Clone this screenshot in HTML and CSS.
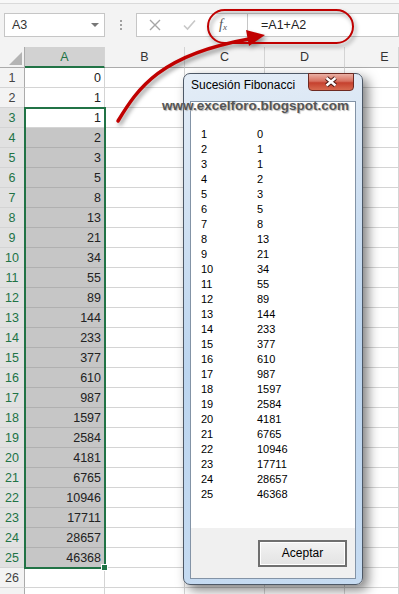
FILE: index.html
```html
<!DOCTYPE html>
<html lang="es">
<head>
  <meta charset="UTF-8" />
  <title>Sucesión Fibonacci</title>
  <link rel="stylesheet" href="styles.css">
</head>
<body>
  <div class="toolbar">
    <div class="namebox"><span>A3</span><span class="caret"></span></div>
    <div class="grip"><i></i><i></i><i></i></div>
    <div class="fxbox">
      <svg class="cancel" width="12" height="12" viewBox="0 0 12 12"><path d="M1 1L11 11M11 1L1 11" stroke="#a6a6a6" stroke-width="1.4" fill="none"/></svg>
      <svg class="enter" width="13" height="12" viewBox="0 0 13 12"><path d="M1 6.5L4.5 10L12 1.5" stroke="#c8c8c8" stroke-width="1.6" fill="none"/></svg>
      <span class="fx">f<sub>x</sub></span>
    </div>
    <div class="formula">=A1+A2</div>
  </div>

  <div class="sheet" id="sheet">
    <div class="corner"></div>
    <div class="colhead on">A</div>
    <div class="colhead">B</div>
    <div class="colhead">C</div>
    <div class="colhead">D</div>
    <div class="colhead last">E</div>
    <div class="selection"></div>
    <div class="handle"></div>
  </div>

  <div class="dialog">
    <div class="titlebar">Sucesión Fibonacci</div>
    <div class="close">
      <svg width="46" height="18" viewBox="0 0 46 18">
        <path d="M18.5 5L27.5 12.5M27.5 5L18.5 12.5" stroke="#4a1a14" stroke-width="4.4" fill="none"/>
        <path d="M18.5 5L27.5 12.5M27.5 5L18.5 12.5" stroke="#fff" stroke-width="2.4" fill="none"/>
      </svg>
    </div>
    <div class="client">
      <div class="list" id="list"></div>
      <div class="buttons"><div class="ok">Aceptar</div></div>
    </div>
  </div>

  <div class="watermark">www.excelforo.blogspot.com</div>

  <svg class="annot" width="399" height="594" viewBox="0 0 399 594">
    <rect x="208" y="10" width="145" height="33" rx="16.5" fill="none" stroke="#c00000" stroke-width="2"/>
    <path d="M118 121C138 88 160 55 249 39" fill="none" stroke="#c00000" stroke-width="3.5" stroke-linecap="round"/>
    <polygon points="265,35 246,30 249,46" fill="#c00000"/>
  </svg>

  <script>
    const fib = [0, 1, 1, 2, 3, 5, 8, 13, 21, 34, 55, 89, 144, 233, 377, 610, 987,
      1597, 2584, 4181, 6765, 10946, 17711, 28657, 46368];

    const sheet = document.getElementById('sheet');
    const sel = sheet.querySelector('.selection');

    // 26 numbered rows plus the top of row 27 peeking in at the bottom
    for (let r = 1; r <= 27; r++) {
      const head = document.createElement('div');
      head.className = 'rowhead' + (r >= 3 && r <= 25 ? ' on' : '');
      if (r <= 26) head.textContent = r;
      sheet.insertBefore(head, sel);

      for (let c = 0; c < 5; c++) {
        const cell = document.createElement('div');
        cell.className = 'cell';
        if (c === 0) {
          cell.classList.add('val');
          if (r >= 4 && r <= 25) cell.classList.add('sel');
          if (r <= 25) cell.textContent = fib[r - 1];
        }
        sheet.insertBefore(cell, sel);
      }
    }

    const list = document.getElementById('list');
    fib.forEach((n, i) => {
      const a = document.createElement('div');
      a.textContent = i + 1;
      const b = document.createElement('div');
      b.textContent = n;
      list.appendChild(a);
      list.appendChild(b);
    });
  </script>
</body>
</html>
```

FILE: styles.css
```css
body {
  margin: 0;
  width: 399px;
  height: 594px;
  overflow: hidden;
  position: relative;
  background: #fff;
  font-family: "Liberation Sans", Arial, sans-serif;
}

/* formula bar */
.toolbar {
  height: 47px;
  box-sizing: border-box;
  padding: 3px 0 0 4px;
  display: flex;
  align-items: center;
  background: linear-gradient(#f8f8f8 0 3px, #dadada 3px 4px, #f3f3f3 4px);
}
.namebox {
  width: 101px;
  height: 24px;
  box-sizing: border-box;
  border: 1px solid #c6c6c6;
  background: #fff;
  display: flex;
  align-items: center;
  justify-content: space-between;
  padding: 0 5px 0 7px;
  font-size: 12.5px;
  color: #333;
}
.caret {
  width: 0;
  height: 0;
  border-left: 4px solid transparent;
  border-right: 4px solid transparent;
  border-top: 4px solid #777;
}
.grip {
  margin-left: 15px;
  display: flex;
  flex-direction: column;
  gap: 2px;
}
.grip i {
  width: 2px;
  height: 2px;
  background: #a0a0a0;
}
.fxbox {
  margin-left: 14px;
  width: 111px;
  height: 24px;
  box-sizing: border-box;
  border: 1px solid #c6c6c6;
  border-right: none;
  background: #fff;
  display: flex;
  align-items: center;
}
.cancel {
  margin-left: 12px;
}
.enter {
  margin-left: 22px;
}
.fx {
  margin-left: 23px;
  font-family: "Liberation Serif", serif;
  font-style: italic;
  font-size: 14px;
  color: #555;
}
.fx sub {
  font-size: 9px;
  vertical-align: -1px;
}
.formula {
  flex: 1;
  height: 24px;
  box-sizing: border-box;
  border: 1px solid #c6c6c6;
  background: #fff;
  padding-left: 13px;
  line-height: 22px;
  font-size: 12.5px;
  color: #222;
}

/* worksheet */
.sheet {
  position: relative;
  display: grid;
  grid-template-columns: 25px repeat(4, 80px) 54px;
  grid-template-rows: 21px;
  grid-auto-rows: 20px;
  font-size: 12.5px;
  color: #222;
}
.corner, .colhead, .rowhead, .cell {
  box-sizing: border-box;
  border-right: 1px solid #d4d4d4;
  border-bottom: 1px solid #d4d4d4;
}
.corner {
  position: relative;
  background: #f3f3f3;
  border-bottom-color: #ababab;
  border-right-color: #ababab;
}
.corner::after {
  content: "";
  position: absolute;
  right: 2px;
  bottom: 2px;
  width: 13px;
  height: 13px;
  background: #b4b4b4;
  clip-path: polygon(100% 0, 100% 100%, 0 100%);
}
.colhead {
  background: #f3f3f3;
  border-bottom-color: #ababab;
  text-align: center;
  line-height: 20px;
  color: #333;
}
.colhead.last {
  padding-left: 26px;
}
.colhead.on {
  background: #d2d2d2;
  color: #217346;
  border-bottom: 2px solid #217346;
}
.rowhead {
  background: #f3f3f3;
  border-right-color: #ababab;
  display: flex;
  align-items: flex-end;
  justify-content: center;
  padding-bottom: 2px;
  line-height: 13px;
  color: #444;
}
.rowhead.on {
  background: #e1e1e1;
  color: #217346;
}
.val {
  display: flex;
  align-items: flex-end;
  justify-content: flex-end;
  padding: 0 3px 2px 0;
  line-height: 13px;
}
.cell.sel {
  background: #c6c6c6;
  border-bottom-color: #b0b0b0;
}
.selection {
  position: absolute;
  left: 24px;
  top: 60px;
  width: 82px;
  height: 462px;
  box-sizing: border-box;
  border: 2px solid #217346;
}
.handle {
  position: absolute;
  left: 101px;
  top: 517px;
  width: 5px;
  height: 5px;
  background: #217346;
  border: 1px solid #fff;
}

/* message box */
.dialog {
  position: absolute;
  left: 183px;
  top: 73px;
  width: 180px;
  height: 512px;
  box-sizing: border-box;
  border: 1px solid #4d5866;
  border-radius: 7px;
  padding: 0 6px 5px;
  display: flex;
  flex-direction: column;
  background: linear-gradient(170deg, #e4edf7 0%, #d3e2f2 22%, #bcd5ef 55%, #c6dbf1 100%);
  box-shadow: 5px 5px 12px rgba(0, 0, 0, 0.5);
}
.titlebar {
  height: 27px;
  box-sizing: border-box;
  padding: 4px 0 0 1px;
  font-size: 12px;
  line-height: 14px;
  color: #000;
}
.close {
  position: absolute;
  left: 124px;
  top: -1px;
  width: 46px;
  height: 18px;
  box-sizing: border-box;
  border: 1px solid #6e2a22;
  border-radius: 0 0 4px 4px;
  background: linear-gradient(#eab0a4, #d8705f 45%, #c5412e 55%, #d76a4f);
}
.close svg {
  display: block;
  margin: -1px 0 0 -1px;
}
.client {
  flex: 1;
  border: 1px solid #8393a6;
  display: flex;
  flex-direction: column;
  background: #fff;
}
.list {
  flex: 1;
  display: grid;
  grid-template-columns: 56px auto;
  grid-auto-rows: 15px;
  align-content: start;
  padding: 25px 0 0 10px;
  font-size: 11px;
  line-height: 15px;
  color: #000;
}
.buttons {
  height: 50px;
  background: #f0f0f0;
  display: flex;
  justify-content: flex-end;
  align-items: flex-start;
  padding: 12px 8px 0 0;
  box-sizing: border-box;
}
.ok {
  width: 89px;
  height: 27px;
  box-sizing: border-box;
  border: 2px solid #6f6f6f;
  box-shadow: inset 0 0 0 1px #fff;
  background: linear-gradient(#f2f2f2, #e3e3e3);
  text-align: center;
  line-height: 23px;
  font-size: 12px;
  color: #000;
}

/* overlays */
.watermark {
  position: absolute;
  left: 162px;
  top: 98px;
  font-size: 13.5px;
  line-height: 16px;
  font-weight: bold;
  color: #555;
  text-shadow: 1px 1px 1px #b5b5b5;
}
.annot {
  position: absolute;
  left: 0;
  top: 0;
  pointer-events: none;
  filter: drop-shadow(2px 3px 2px rgba(0, 0, 0, 0.4));
}
```
